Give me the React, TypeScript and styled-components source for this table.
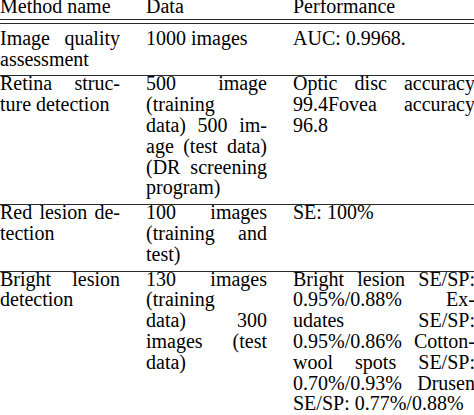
import styled, { createGlobalStyle } from 'styled-components'

const GlobalStyle = createGlobalStyle`
  html, body {
    margin: 0;
    padding: 0;
    background: #fff;
    overflow: hidden;
  }
  body {
    font-family: "Liberation Serif", "Times New Roman", serif;
    font-size: 20px;
    color: #000;
  }
`

type Row = {
  method: string[]
  data: string[]
  performance: string[]
}

const rows: Row[] = [
  {
    method: ['Image quality', 'assessment'],
    data: ['1000 images'],
    performance: ['AUC: 0.9968.'],
  },
  {
    method: ['Retina struc-', 'ture detection'],
    data: [
      '500 image',
      '(training',
      'data) 500 im-',
      'age (test data)',
      '(DR screening',
      'program)',
    ],
    performance: ['Optic disc accuracy', '99.4Fovea accuracy', '96.8'],
  },
  {
    method: ['Red lesion de-', 'tection'],
    data: ['100 images', '(training and', 'test)'],
    performance: ['SE: 100%'],
  },
  {
    method: ['Bright lesion', 'detection'],
    data: ['130 images', '(training', 'data) 300', 'images (test', 'data)'],
    performance: [
      'Bright lesion SE/SP:',
      '0.95%/0.88% Ex-',
      'udates SE/SP:',
      '0.95%/0.86% Cotton-',
      'wool spots SE/SP:',
      '0.70%/0.93% Drusen',
      'SE/SP: 0.77%/0.88%',
    ],
  },
]

const Table = styled.div`
  width: 475px;
  margin-top: -2px;
`

const Grid = styled.div`
  display: grid;
  grid-template-columns: 120px 121px 182px;
  column-gap: 26px;
`

const HeaderRow = styled(Grid)`
  border-bottom: 1px solid #2a2a2a;
`

const BodyRow = styled(Grid)<{ $first?: boolean }>`
  border-top: 1px solid #2a2a2a;
  margin-top: ${({ $first }) => ($first ? '3px' : '0')};
  padding-top: ${({ $first }) => ($first ? '7px' : '0')};
`

const Cell = styled.div`
  margin-top: -3px;
  padding-bottom: 6px;
  line-height: 20.8px;
`

// header text sits a touch lower and closer to the double rule
const HeaderCell = styled(Cell)`
  margin-top: -2px;
  padding-bottom: 2px;
`

const Line = styled.div<{ $justify: boolean }>`
  display: flex;
  justify-content: ${({ $justify }) => ($justify ? 'space-between' : 'flex-start')};
  white-space: pre;
`

function Lines({ lines }: { lines: string[] }) {
  return (
    <Cell>
      {lines.map((line, i) => {
        const justify = i < lines.length - 1 && line.includes(' ')
        return (
          <Line key={i} $justify={justify}>
            {justify
              ? line.split(' ').map((word, j) => <span key={j}>{word}</span>)
              : line}
          </Line>
        )
      })}
    </Cell>
  )
}

export default function App() {
  return (
    <>
      <GlobalStyle />
      <Table>
        <HeaderRow>
          <HeaderCell>Method name</HeaderCell>
          <HeaderCell>Data</HeaderCell>
          <HeaderCell>Performance</HeaderCell>
        </HeaderRow>
        {rows.map((row, i) => (
          <BodyRow key={i} $first={i === 0}>
            <Lines lines={row.method} />
            <Lines lines={row.data} />
            <Lines lines={row.performance} />
          </BodyRow>
        ))}
      </Table>
    </>
  )
}
